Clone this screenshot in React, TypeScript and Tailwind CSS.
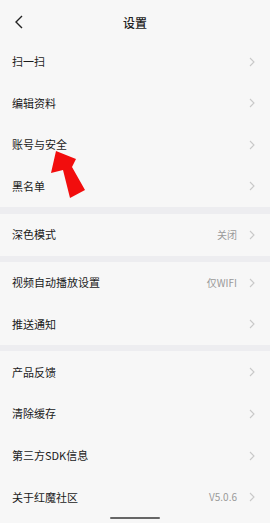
import { ReactNode } from 'react';

type Row = { label: string; value?: string };

const GROUPS: Row[][] = [
  [{ label: '扫一扫' }, { label: '编辑资料' }, { label: '账号与安全' }, { label: '黑名单' }],
  [{ label: '深色模式', value: '关闭' }],
  [{ label: '视频自动播放设置', value: '仅WIFI' }, { label: '推送通知' }],
  [{ label: '产品反馈' }, { label: '清除缓存' }, { label: '第三方SDK信息' }, { label: '关于红魔社区', value: 'V5.0.6' }],
];

function Chevron() {
  return (
    <svg width="6" height="10" viewBox="0 0 6 10" className="shrink-0">
      <path d="M1 1 L5 5 L1 9" fill="none" stroke="#c9c9c9" strokeWidth="1.1" />
    </svg>
  );
}

function SettingRow({ row, first }: { row: Row; first: boolean }) {
  return (
    <div className={`flex ${first ? 'h-[41.5px]' : 'h-[41.75px]'} items-center pl-3 pr-[15px] leading-none`}>
      <span className="flex-1 text-[11px] text-[#1a1a1a]">{row.label}</span>
      {row.value && <span className="mr-3 text-[10px] text-[#9a9a9a]">{row.value}</span>}
      <Chevron />
    </div>
  );
}

function Group({ children }: { children: ReactNode }) {
  return <div className="flex flex-col">{children}</div>;
}

export default function App() {
  return (
    <div
      className="relative h-[523px] w-[270px] overflow-hidden bg-[#f7f7f7]"
      style={{ fontFamily: '"Noto Sans CJK SC", "Noto Sans", sans-serif' }}
    >
      {/* Header */}
      <div className="relative flex h-[41px] items-center justify-center pt-1 leading-none">
        <svg width="10" height="14" viewBox="0 0 10 14" className="absolute left-[14px] top-[15px]">
          <path d="M8 1 L2 7 L8 13" fill="none" stroke="#222" strokeWidth="1.4" />
        </svg>
        <span className="text-[12px] font-medium text-[#222]">设置</span>
      </div>

      {GROUPS.map((group, gi) => (
        <div key={gi}>
          {gi > 0 && <div className={gi === 1 ? 'h-[7px] bg-[#ededf0]' : 'h-[6px] bg-[#ededf0]'} />}
          <Group>
            {group.map((row) => (
              <SettingRow key={row.label} row={row} first={gi === 0} />
            ))}
          </Group>
        </div>
      ))}

      {/* Red arrow annotation */}
      <svg width="270" height="523" className="pointer-events-none absolute left-0 top-0">
        <polygon points="56,151 76,159 72,167 85,190 70,198 63,170 51,173" fill="#f20d0d" />
      </svg>

      {/* Home indicator */}
      <div className="absolute bottom-[4px] left-[110px] h-[2px] w-[50px] rounded-full bg-[#666]" />
    </div>
  );
}
